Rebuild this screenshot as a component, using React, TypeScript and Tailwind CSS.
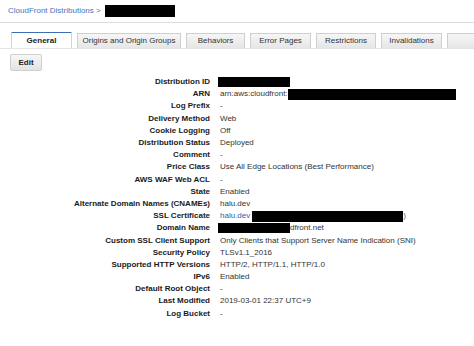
import React from "react";

type Row = { label: string; value: React.ReactNode };

function Redacted({ w, h = 10, className = "" }: { w: number; h?: number; className?: string }) {
  return <span className={`inline-block bg-black align-middle ${className}`} style={{ width: w, height: h }} />;
}

const rows: Row[] = [
  { label: "Distribution ID", value: <Redacted w={72} className="-ml-[2px]" /> },
  {
    label: "ARN",
    value: (
      <span className="flex items-center">
        arn:aws:cloudfront:
        <Redacted w={168} h={11} />
      </span>
    ),
  },
  { label: "Log Prefix", value: "-" },
  { label: "Delivery Method", value: "Web" },
  { label: "Cookie Logging", value: "Off" },
  { label: "Distribution Status", value: "Deployed" },
  { label: "Comment", value: "-" },
  { label: "Price Class", value: "Use All Edge Locations (Best Performance)" },
  { label: "AWS WAF Web ACL", value: "-" },
  { label: "State", value: "Enabled" },
  { label: "Alternate Domain Names (CNAMEs)", value: "halu.dev" },
  {
    label: "SSL Certificate",
    value: (
      <span className="flex items-center text-[#2e5fae]">
        halu.dev (
        <Redacted w={151} h={11} className="-ml-[3px]" />)
      </span>
    ),
  },
  {
    label: "Domain Name",
    value: (
      <span className="flex items-center">
        <Redacted w={72} className="-ml-[2px]" />
        dfront.net
      </span>
    ),
  },
  { label: "Custom SSL Client Support", value: "Only Clients that Support Server Name Indication (SNI)" },
  { label: "Security Policy", value: "TLSv1.1_2016" },
  { label: "Supported HTTP Versions", value: "HTTP/2, HTTP/1.1, HTTP/1.0" },
  { label: "IPv6", value: "Enabled" },
  { label: "Default Root Object", value: "-" },
  { label: "Last Modified", value: "2019-03-01 22:37 UTC+9" },
  { label: "Log Bucket", value: "-" },
];

const tabs = [
  { name: "Origins and Origin Groups", w: "w-[104px]" },
  { name: "Behaviors", w: "w-[59px]" },
  { name: "Error Pages", w: "w-[61px]" },
  { name: "Restrictions", w: "w-[60px]" },
  { name: "Invalidations", w: "w-[61px]" },
  { name: "", w: "w-[61px]" },
];

export default function App() {
  return (
    <div className="h-[346px] w-[474px] overflow-hidden bg-white font-['Liberation_Sans',Arial,sans-serif] text-[8px] text-[#333]">
      <div className="flex h-[23px] items-center border-b border-[#dcdcdc] pl-[8px] pb-[1px]">
        <span className="text-[#4a74b5]">CloudFront Distributions &gt;</span>
        <Redacted w={70} h={12} className="ml-[4px]" />
      </div>

      <div className="mt-[9px] flex h-[17px] items-end gap-[5px] overflow-hidden border-b border-[#e4e4e4] pl-[11px]">
        <div className="flex h-[17px] w-[61px] shrink-0 items-center justify-center border-x border-t-2 border-x-[#d4d4d4] border-t-[#3c6fb4] bg-white font-bold text-[#222]">
          General
        </div>
        {tabs.map((t, i) => (
          <div
            key={i}
            className={`flex h-[15px] ${t.w} shrink-0 items-center justify-center border border-b-0 border-[#cfcfcf] bg-gradient-to-b from-[#f6f6f6] to-[#e6e6e6] text-[#333]`}
          >
            {t.name}
          </div>
        ))}
      </div>

      <button className="ml-[10px] mt-[5px] flex h-[17px] w-[32px] items-center justify-center rounded-[2px] border border-[#cfcfcf] bg-gradient-to-b from-[#f7f7f7] to-[#e3e3e3] font-bold text-[#222]">
        Edit
      </button>

      <div className="mt-[5px] grid grid-cols-[210px_1fr]">
        {rows.map((r) => (
          <React.Fragment key={r.label}>
            <div className="flex h-[12.2px] items-center justify-end whitespace-nowrap font-bold text-[#1a1a1a]">
              {r.label}
            </div>
            <div className="flex h-[12.2px] items-center whitespace-nowrap pl-[10px] text-[#333]">{r.value}</div>
          </React.Fragment>
        ))}
      </div>
    </div>
  );
}
